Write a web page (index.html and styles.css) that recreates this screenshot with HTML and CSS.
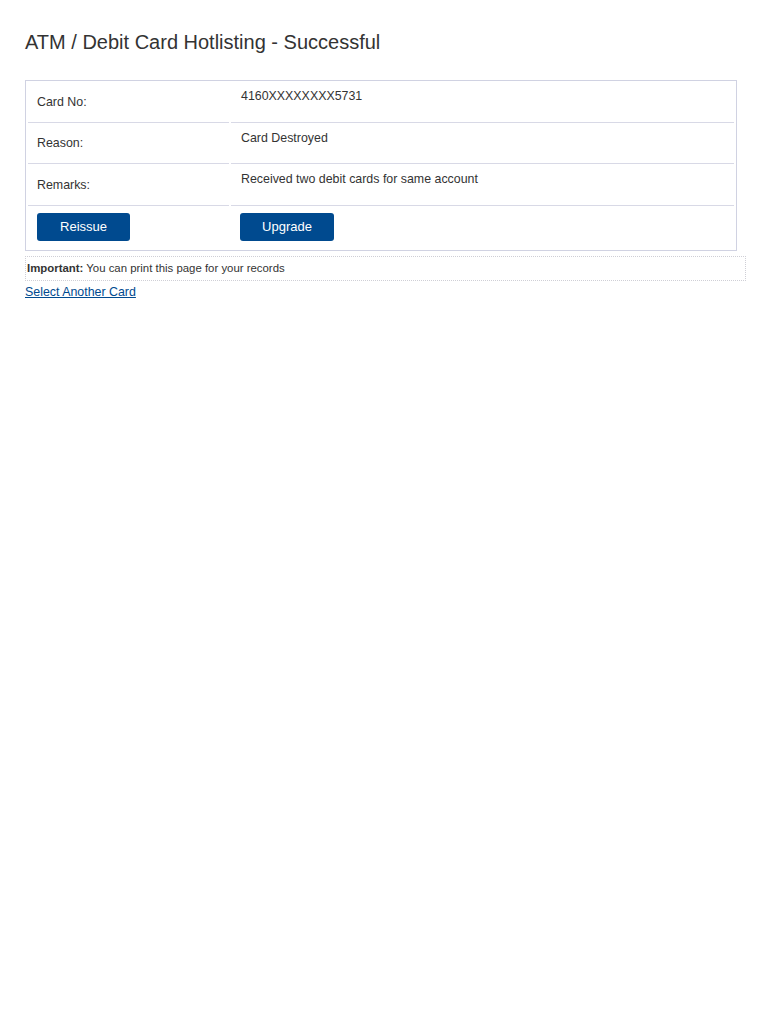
FILE: index.html
```html
<!DOCTYPE html>
<html>
<head>
<meta charset="utf-8">
<title>ATM / Debit Card Hotlisting - Successful</title>
<link rel="stylesheet" href="styles.css">
</head>
<body>
<div class="page">
  <h1 class="title">ATM / Debit Card Hotlisting - Successful</h1>
  <div class="box">
    <table class="details">
      <tr>
        <td class="label">Card No:</td>
        <td class="value">4160XXXXXXXX5731</td>
      </tr>
      <tr>
        <td class="label">Reason:</td>
        <td class="value">Card Destroyed</td>
      </tr>
      <tr>
        <td class="label">Remarks:</td>
        <td class="value">Received two debit cards for same account</td>
      </tr>
      <tr class="actions">
        <td class="btn-cell"><button class="btn btn-reissue">Reissue</button></td>
        <td class="btn-cell btn-cell-right"><button class="btn btn-upgrade">Upgrade</button></td>
      </tr>
    </table>
  </div>
  <div class="note"><strong>Important:</strong> You can print this page for your records</div>
  <a class="link" href="#">Select Another Card</a>
</div>
</body>
</html>
```

FILE: styles.css
```css
html, body {
  margin: 0;
  padding: 0;
  background: #ffffff;
}
body {
  font-family: "Liberation Sans", Arial, sans-serif;
  color: #333333;
}
.page {
  padding: 30px 23px 0 25px;
}
.title {
  font-size: 20px;
  font-weight: normal;
  color: #333333;
  margin: 0 0 26px 0;
  line-height: 24px;
}
.box {
  width: 710px;
  border: 1px solid #d0d2e2;
}
.details {
  width: 100%;
  border-collapse: separate;
  border-spacing: 2px 1px;
}
.details td {
  height: 40.5px;
  box-sizing: border-box;
  border-bottom: 1px solid #d8d9e6;
  font-size: 12.4px;
  line-height: 15px;
  color: #333333;
}
.label {
  width: 201px;
  padding: 1px 0 0 9px;
  vertical-align: middle;
}
.value {
  padding: 7px 0 0 10px;
  vertical-align: top;
}
.actions td {
  border-bottom: none;
  height: 42px;
  padding: 6px 0 0 9px;
  vertical-align: top;
}
.btn {
  display: block;
  height: 28px;
  border: none;
  border-radius: 3px;
  background: #004a8f;
  color: #ffffff;
  font-family: "Liberation Sans", Arial, sans-serif;
  font-size: 13px;
  padding: 0;
}
.btn-reissue { width: 93px; }
.btn-upgrade { width: 94px; }
.note {
  margin-top: 5px;
  border: 1px dotted #cfcfd6;
  height: 25px;
  box-sizing: border-box;
  width: 721px;
  padding: 5px 0 0 1px;
  font-size: 11.4px;
  color: #333333;
}
.note strong {
  font-weight: bold;
}
.link {
  display: inline-block;
  margin-top: 4px;
  font-size: 12.4px;
  color: #004a8f;
  text-decoration: underline;
}
```
